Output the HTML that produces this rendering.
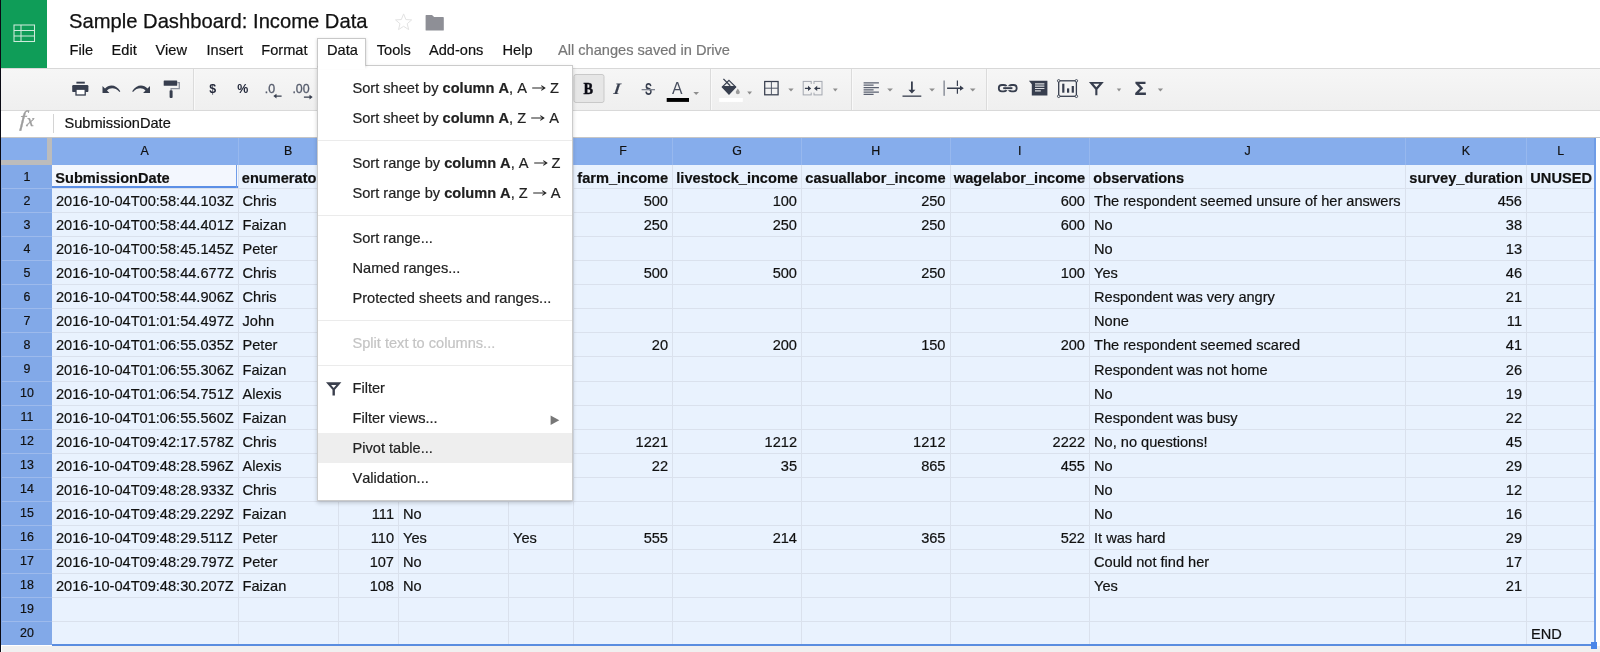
<!DOCTYPE html>
<html><head><meta charset="utf-8"><title>Sample Dashboard: Income Data</title>
<style>
html,body{margin:0;padding:0;}
body{width:1600px;height:652px;overflow:hidden;position:relative;background:#fff;font-family:"Liberation Sans",sans-serif;color:#111;font-size:14.6px;}
div{box-sizing:border-box;}
.abs{position:absolute;}
#wrap{position:absolute;left:0;top:0;width:1600px;height:652px;will-change:transform;}
#edge{position:absolute;left:0;top:0;width:1px;height:652px;background:#0a0a14;z-index:50;}
#logo{position:absolute;left:1px;top:0;width:45.5px;height:67.5px;background:#0f9d58;}
#title{position:absolute;left:69px;top:9px;-webkit-text-stroke:0.25px #111;font-size:20.2px;line-height:24px;color:#111;white-space:nowrap;}
.mi{-webkit-text-stroke:0.2px;position:absolute;top:40px;line-height:20px;font-size:14.6px;color:#111;white-space:nowrap;}
#saved{color:#777;}
#datatab{position:absolute;left:317px;top:38px;width:49px;height:28px;background:#fff;border:1px solid #c8c8c8;border-bottom:none;z-index:31;box-shadow:0 1px 3px rgba(0,0,0,.18);}
#datatabcover{position:absolute;left:318px;top:60px;width:47px;height:9px;background:#fff;z-index:33;}
#toolbar{position:absolute;left:1px;top:68px;width:1599px;height:43px;background:linear-gradient(#f6f6f6,#efefef);border-top:1px solid #d8d8d8;border-bottom:1px solid #d9d9d9;}
.tsep{position:absolute;top:69px;width:1px;height:41px;background:#dbdbdb;box-shadow:1px 0 0 #f9f9f9;}
#fbar{position:absolute;left:1px;top:111px;width:1599px;height:27px;background:#fff;border-bottom:1px solid #c6c6c6;}
#fx{position:absolute;left:20px;top:106.4px;transform:skewX(-4deg);font-family:"Liberation Serif",serif;font-style:italic;font-size:22px;line-height:26px;color:#9d9d9d;-webkit-text-stroke:0.35px #9d9d9d;white-space:nowrap;}
#fx span{font-size:17px;margin-left:0.6px;}
#fsep{position:absolute;left:52.5px;top:114px;width:1px;height:19px;background:#d4d4d4;}
#ftext{-webkit-text-stroke:0.2px;position:absolute;left:64.5px;top:110.5px;line-height:24px;font-size:14.6px;color:#111;}
/* grid */
#gridbg{position:absolute;left:51.5px;top:164.5px;width:1543.5px;height:481px;background:#e9f2fe;}
#colhdr{position:absolute;left:1px;top:138px;width:1594px;height:26.5px;background:#86adec;}
#rowhdr{position:absolute;left:1px;top:164.5px;width:50.5px;height:480px;background:#82a9e8;}
#corner{position:absolute;left:1px;top:138px;width:51px;height:27px;background:#86adec;border-right:5px solid #bcbcbc;border-bottom:5.5px solid #bcbcbc;}
.ch{-webkit-text-stroke:0.2px;position:absolute;top:137.5px;height:27px;line-height:27.4px;text-align:center;font-size:12.4px;color:#111;}
.chl{position:absolute;top:138px;width:1px;height:26.5px;background:#97b8ee;}
.rh{-webkit-text-stroke:0.2px;position:absolute;left:2px;width:50px;height:24px;line-height:24px;text-align:center;font-size:12.4px;color:#111;}
.rhl{position:absolute;left:1.5px;width:50px;height:1px;background:#9dbaec;}
.vl{position:absolute;top:164.5px;width:1px;height:481px;background:#dae1ed;}
.hl{position:absolute;left:51.5px;width:1543.5px;height:1px;background:#dae1ed;}
.c{-webkit-text-stroke:0.2px;position:absolute;height:24px;line-height:24px;padding:0 4.5px;white-space:nowrap;overflow:visible;font-size:14.6px;color:#111;}
.c.b{font-weight:bold;padding-left:3.8px;}
.c.r{text-align:right;}
#selb{position:absolute;left:51.5px;top:644px;width:1544.5px;height:2px;background:#5a8de0;}
#selr{position:absolute;left:1594px;top:137.5px;width:2px;height:508px;background:#6f9ce6;}
#handle{position:absolute;left:1591px;top:641.5px;width:6px;height:7.5px;background:#4a86e8;}
#below{position:absolute;left:1.5px;top:646px;width:1598.5px;height:6px;background:#f0f0f0;}
#active{position:absolute;left:51.5px;top:164.5px;width:186.5px;height:24px;background:#f3f7fe;}
#actb{position:absolute;left:52px;top:186px;width:186px;height:2px;background:#5b8fe6;z-index:6;}
#actr{position:absolute;left:236px;top:165px;width:1px;height:23px;background:#6f9dea;z-index:6;}
/* menu */
#menu{position:absolute;left:317px;top:65px;width:256px;height:435.5px;background:#fff;border:1px solid #cbcbcb;box-shadow:0 2px 4px rgba(0,0,0,.19);z-index:30;}
.it{-webkit-text-stroke:0.2px;font-kerning:none;position:absolute;left:0;width:254px;height:30px;line-height:30px;padding-left:34.5px;font-size:14.6px;color:#222;white-space:nowrap;}
.it.dis{color:#c4c4c4;}
.it.hi{background:#eeeeee;}
.ar{display:inline-block;vertical-align:-0.5px;}
.ms{position:absolute;left:0;width:254px;height:1px;background:#ebebeb;}
</style></head>
<body>
<div id="wrap">
<div id="edge"></div>
<div id="logo">
<svg class="abs" style="left:12px;top:23.6px" width="23" height="19" viewBox="0 0 23 19"><g fill="none" stroke="#cdeadb" stroke-width="1.05"><rect x="1" y="1" width="20.5" height="16.5"/><line x1="1" y1="6.5" x2="21.5" y2="6.5"/><line x1="1" y1="12" x2="21.5" y2="12"/><line x1="8" y1="1" x2="8" y2="17.5"/></g></svg>
</div>
<div id="title">Sample Dashboard: Income Data</div>
<svg class="abs" style="left:393px;top:11px" width="54" height="22" viewBox="393 11 54 22">
<path d="M403.6 13.9 L405.9 19.6 L411.7 19.9 L407.2 23.7 L408.7 29.6 L403.6 26.3 L398.5 29.6 L400 23.7 L395.5 19.9 L401.3 19.6 Z" fill="none" stroke="#e2e2e2" stroke-width="1"/>
<path d="M425.6 15.6 Q425.6 15 426.2 15 H432 L434.1 17 H443.1 Q443.8 17 443.8 17.7 V29.9 Q443.8 30.6 443.1 30.6 H426.2 Q425.6 30.6 425.6 29.9 Z" fill="#8e8f96"/>
</svg>
<div class="mi" style="left:69.6px">File</div>
<div class="mi" style="left:111.6px">Edit</div>
<div class="mi" style="left:155.6px">View</div>
<div class="mi" style="left:206.5px">Insert</div>
<div class="mi" style="left:261.3px">Format</div>
<div id="datatab"></div><div id="datatabcover"></div>
<div class="mi" style="left:327px;z-index:34">Data</div>
<div class="mi" style="left:376.8px">Tools</div>
<div class="mi" style="left:429px">Add-ons</div>
<div class="mi" style="left:502.5px">Help</div>
<div class="mi" id="saved" style="left:558px">All changes saved in Drive</div>

<div id="toolbar"></div>
<div class="tsep" style="left:192.8px"></div>
<div class="tsep" style="left:710.2px"></div>
<div class="tsep" style="left:851px"></div>
<div class="tsep" style="left:986.3px"></div>
<!--ICONS_START-->
<svg class="abs" style="left:0;top:68px;z-index:5" width="1600" height="42" viewBox="0 68 1600 42">
<g fill="#373e4e">
<!-- print -->
<rect x="76.4" y="81.7" width="8.4" height="1.9"/>
<rect x="72.2" y="85.1" width="16.2" height="7" rx="1.2"/>
<rect x="76" y="89.2" width="9.2" height="5.8" fill="#fff" stroke="#373e4e" stroke-width="1.3"/>
<!-- undo -->
<path d="M102.5 86.0 L102.5 92.9 L109.4 92.9 L107.0 90.5 C110 87.6 115.2 87.3 119.5 91.9 L120.3 91.2 C116.4 84.6 109.2 84.0 105.0 88.5 Z"/>
<!-- redo -->
<path d="M150.0 86.0 L150.0 92.9 L143.1 92.9 L145.5 90.5 C142.5 87.6 137.3 87.3 133.0 91.9 L132.2 91.2 C136.1 84.6 143.3 84.0 147.5 88.5 Z"/>
<!-- paint roller -->
<rect x="163.7" y="80.5" width="13.5" height="5.3" rx="0.6"/>
<path d="M177.2 82.6 H179.3 V88.7 H171.1 V90.6" fill="none" stroke="#8d929d" stroke-width="1.3"/>
<rect x="169.6" y="90.2" width="3" height="7.8" rx="0.9"/>
</g>
<g font-family="Liberation Sans, sans-serif" font-size="12.4" fill="#23283a">
<text x="209.3" y="92.9" font-weight="bold">$</text>
<text x="237.3" y="93.1" font-weight="bold">%</text>
<text x="264.7" y="93.2" fill="#565c6c" stroke="#565c6c" stroke-width="0.3">.0</text>
<text x="292.4" y="93.2" fill="#565c6c" stroke="#565c6c" stroke-width="0.3">.00</text>
</g>
<g fill="#373e4e">
<path d="M273.3 96.1 L276.5 93.7 V95.4 H281.6 V96.8 H276.5 V98.5 Z"/>
<path d="M312.7 97.1 L309.5 94.7 V96.4 H303.9 V97.8 H309.5 V99.5 Z"/>
</g>
<!-- bold button -->
<rect x="574" y="74.5" width="30" height="28" rx="2" fill="#e6e6e6" stroke="#c9c9c9" stroke-width="1"/>
<text transform="translate(583.5,93.7) scale(0.9,1)" font-family="Liberation Serif, serif" font-weight="bold" font-size="15.9" fill="#0b0b14" stroke="#0b0b14" stroke-width="0.45">B</text>
<text transform="translate(613.2,94) skewX(-9)" font-family="Liberation Serif, serif" font-weight="bold" font-style="italic" font-size="16" fill="#373e4e" stroke="#373e4e" stroke-width="0.2">I</text>
<text transform="translate(644.9,94.9) scale(0.68,1)" font-family="Liberation Sans, sans-serif" font-weight="bold" font-size="15.6" fill="#373e4e">S</text>
<rect x="641.6" y="89" width="13.4" height="1.3" fill="#7d828e"/>
<text x="671.9" y="94" font-family="Liberation Sans, sans-serif" font-size="15.7" fill="#474e5e">A</text>
<rect x="666.7" y="98" width="22.3" height="3.9" fill="#000"/>
<g fill="#8e8e8e">
<path d="M693.4 91.9 H699 L696.2 94.9 Z"/>
<path d="M747.2 91.4 H752 L749.6 94.5 Z"/>
<path d="M788.3 88.4 H793.6 L791 91.4 Z"/>
<path d="M832.9 88.4 H837.7 L835.3 91.4 Z"/>
<path d="M887.2 88.4 H892.9 L890 91.4 Z"/>
<path d="M929.2 88.4 H934.9 L932 91.4 Z"/>
<path d="M969.9 88.4 H975.5 L972.7 91.4 Z"/>
<path d="M1116.8 88.4 H1121.2 L1119 91.4 Z"/>
<path d="M1157.8 88.4 H1163.1 L1160.4 91.4 Z"/>
</g>
<!-- bucket -->
<path d="M729 80.3 L735.8 87.1 L729 94.2 L722.2 87.1 Z" fill="#e9e9e9" stroke="#373e4e" stroke-width="1.1"/>
<path d="M723.4 85.9 H734.6 L735.8 87.1 L729 94.2 L722.2 87.1 Z" fill="#373e4e"/>
<path d="M723.4 78.9 L730.2 85.7" stroke="#373e4e" stroke-width="1.3" fill="none"/>
<path d="M737.8 88.6 C739 90.4 739.8 91.3 739.8 92.2 A2 2 0 0 1 735.8 92.2 C735.8 91.3 736.6 90.4 737.8 88.6 Z" fill="#9b9b9b"/>
<rect x="719.2" y="98" width="23.6" height="3.9" fill="#fff"/>
<!-- borders -->
<rect x="764.7" y="81.5" width="13.4" height="13.3" fill="none" stroke="#373e4e" stroke-width="1.25"/>
<path d="M771.4 81.6 V94.7 M764.8 88.2 H778" stroke="#4b5262" stroke-width="0.95" fill="none"/>
<!-- merge -->
<rect x="803.2" y="81.4" width="8" height="13.5" fill="none" stroke="#a3a7b0" stroke-width="1"/>
<rect x="814" y="81.4" width="8" height="13.5" fill="none" stroke="#a3a7b0" stroke-width="1"/>
<rect x="809.5" y="84" width="6.2" height="8.6" fill="#f3f3f3"/>
<g fill="#373e4e">
<path d="M811.2 88.4 L808 85.8 V87.7 H804.9 V89.1 H808 V91 Z"/>
<path d="M814 88.4 L817.2 85.8 V87.7 H820.3 V89.1 H817.2 V91 Z"/>
</g>
<!-- align -->
<g stroke="#5a6070" stroke-width="1.25" fill="none">
<path d="M863.6 82.9 H878.9 M863.6 85.2 H873.6 M863.6 87.5 H878.9 M863.6 89.8 H873.6 M863.6 92.1 H878.9 M863.6 94.4 H873.6"/>
</g>
<!-- valign -->
<g fill="#373e4e">
<path d="M911 81.4 H912.8 V89.7 H915.4 L911.9 93.4 L908.4 89.7 H911 Z"/>
<rect x="902.5" y="95.5" width="18.8" height="1.3"/>
</g>
<!-- wrap -->
<path d="M944.1 80.5 V95.8" stroke="#5a6070" stroke-width="1" fill="none"/>
<path d="M957.4 80.5 V95.8" stroke="#373e4e" stroke-width="1.2" stroke-dasharray="5.5 2.2" fill="none"/>
<path d="M947.1 87.4 H960 V85.6 L963.8 88.2 L960 90.8 V89 H947.1 Z" fill="#373e4e"/>
<!-- link -->
<g fill="none" stroke="#373e4e" stroke-width="1.8">
<rect x="998.8" y="85" width="8" height="6.3" rx="3.1"/>
<rect x="1008.7" y="85" width="8" height="6.3" rx="3.1"/>
</g>
<rect x="1005.4" y="86.2" width="4.8" height="3.9" fill="#f3f3f3"/>
<rect x="1003.2" y="87.2" width="9.2" height="1.9" fill="#373e4e"/>
<!-- comment -->
<path d="M1028.9 80.7 H1047.4 V95.5 H1031.8 V84.2 Z" fill="#373e4e"/>
<path d="M1035 83.9 H1044.4 M1035 86.2 H1044.4 M1035 88.5 H1044.4 M1035 90.8 H1040.8" stroke="#dcdde0" stroke-width="1.2" fill="none"/>
<!-- chart -->
<rect x="1058.7" y="80.8" width="17.7" height="15.5" fill="#f3f3f3" stroke="#373e4e" stroke-width="1.3"/>
<g fill="#f3f3f3" stroke="#373e4e" stroke-width="0.9">
<circle cx="1058.7" cy="80.8" r="1.25"/><circle cx="1076.4" cy="80.8" r="1.25"/><circle cx="1058.7" cy="96.3" r="1.25"/><circle cx="1076.4" cy="96.3" r="1.25"/>
</g>
<g fill="#373e4e">
<rect x="1062.2" y="83.7" width="2.2" height="9"/>
<rect x="1067" y="88.4" width="2.2" height="4.3"/>
<rect x="1071.7" y="86" width="2.2" height="6.7"/>
<!-- filter -->
<path d="M1088.9 81.9 H1103.8 L1097.4 89.4 V95.2 H1095.3 V89.4 Z M1093.3 83.8 L1096.35 87.3 L1099.4 83.8 Z" fill-rule="evenodd"/>
<!-- sigma -->
<path d="M1135.4 81.7 H1145.5 V84 H1139.2 L1143.2 88.2 L1138.9 92.6 H1145.9 V94.9 H1135.2 V93.1 L1139.9 88.2 L1135.4 83.5 Z"/>
</g>
</svg>
<!--ICONS_END-->

<div id="fbar"></div>
<div id="fx">f<span>x</span></div><div id="fsep"></div><div id="ftext">SubmissionDate</div>

<div id="colhdr"></div><div id="rowhdr"></div><div id="gridbg"></div><div id="active"></div><div id="actb"></div><div id="actr"></div>
<div class="ch" style="left:51.5px;width:186.5px">A</div>
<div class="chl" style="left:237.5px"></div>
<div class="ch" style="left:238px;width:100.5px">B</div>
<div class="chl" style="left:338.0px"></div>
<div class="ch" style="left:338.5px;width:60.0px">C</div>
<div class="chl" style="left:398.0px"></div>
<div class="ch" style="left:398.5px;width:110.0px">D</div>
<div class="chl" style="left:508.0px"></div>
<div class="ch" style="left:508.5px;width:65.0px">E</div>
<div class="chl" style="left:573.0px"></div>
<div class="ch" style="left:573.5px;width:99.0px">F</div>
<div class="chl" style="left:672.0px"></div>
<div class="ch" style="left:672.5px;width:129.0px">G</div>
<div class="chl" style="left:801.0px"></div>
<div class="ch" style="left:801.5px;width:148.5px">H</div>
<div class="chl" style="left:949.5px"></div>
<div class="ch" style="left:950px;width:139.5px">I</div>
<div class="chl" style="left:1089.0px"></div>
<div class="ch" style="left:1089.5px;width:316.0px">J</div>
<div class="chl" style="left:1405.0px"></div>
<div class="ch" style="left:1405.5px;width:121.0px">K</div>
<div class="chl" style="left:1526.0px"></div>
<div class="ch" style="left:1526.5px;width:68.5px">L</div>
<div class="chl" style="left:1594.5px"></div>
<div class="rh" style="top:165.00px">1</div>
<div class="rhl" style="top:188.06px"></div>
<div class="rh" style="top:189.00px">2</div>
<div class="rhl" style="top:212.12px"></div>
<div class="rh" style="top:213.00px">3</div>
<div class="rhl" style="top:236.18px"></div>
<div class="rh" style="top:237.00px">4</div>
<div class="rhl" style="top:260.24px"></div>
<div class="rh" style="top:261.00px">5</div>
<div class="rhl" style="top:284.30px"></div>
<div class="rh" style="top:285.00px">6</div>
<div class="rhl" style="top:308.36px"></div>
<div class="rh" style="top:309.00px">7</div>
<div class="rhl" style="top:332.42px"></div>
<div class="rh" style="top:333.00px">8</div>
<div class="rhl" style="top:356.48px"></div>
<div class="rh" style="top:357.00px">9</div>
<div class="rhl" style="top:380.54px"></div>
<div class="rh" style="top:381.00px">10</div>
<div class="rhl" style="top:404.60px"></div>
<div class="rh" style="top:405.00px">11</div>
<div class="rhl" style="top:428.66px"></div>
<div class="rh" style="top:429.00px">12</div>
<div class="rhl" style="top:452.72px"></div>
<div class="rh" style="top:453.00px">13</div>
<div class="rhl" style="top:476.78px"></div>
<div class="rh" style="top:477.00px">14</div>
<div class="rhl" style="top:500.84px"></div>
<div class="rh" style="top:501.00px">15</div>
<div class="rhl" style="top:524.90px"></div>
<div class="rh" style="top:525.00px">16</div>
<div class="rhl" style="top:548.96px"></div>
<div class="rh" style="top:549.00px">17</div>
<div class="rhl" style="top:573.02px"></div>
<div class="rh" style="top:573.00px">18</div>
<div class="rhl" style="top:597.08px"></div>
<div class="rh" style="top:597.00px">19</div>
<div class="rhl" style="top:621.14px"></div>
<div class="rh" style="top:621.00px">20</div>
<div class="vl" style="left:237.5px"></div>
<div class="vl" style="left:338.0px"></div>
<div class="vl" style="left:398.0px"></div>
<div class="vl" style="left:508.0px"></div>
<div class="vl" style="left:573.0px"></div>
<div class="vl" style="left:672.0px"></div>
<div class="vl" style="left:801.0px"></div>
<div class="vl" style="left:949.5px"></div>
<div class="vl" style="left:1089.0px"></div>
<div class="vl" style="left:1405.0px"></div>
<div class="vl" style="left:1526.0px"></div>
<div class="hl" style="top:188.06px"></div>
<div class="hl" style="top:212.12px"></div>
<div class="hl" style="top:236.18px"></div>
<div class="hl" style="top:260.24px"></div>
<div class="hl" style="top:284.30px"></div>
<div class="hl" style="top:308.36px"></div>
<div class="hl" style="top:332.42px"></div>
<div class="hl" style="top:356.48px"></div>
<div class="hl" style="top:380.54px"></div>
<div class="hl" style="top:404.60px"></div>
<div class="hl" style="top:428.66px"></div>
<div class="hl" style="top:452.72px"></div>
<div class="hl" style="top:476.78px"></div>
<div class="hl" style="top:500.84px"></div>
<div class="hl" style="top:524.90px"></div>
<div class="hl" style="top:548.96px"></div>
<div class="hl" style="top:573.02px"></div>
<div class="hl" style="top:597.08px"></div>
<div class="hl" style="top:621.14px"></div>
<div class="c b" style="left:51.5px;top:166.00px;width:186.5px">SubmissionDate</div>
<div class="c b" style="left:238px;top:166.00px;width:100.5px">enumerator_name</div>
<div class="c b" style="left:338.5px;top:166.00px;width:60.0px">hhid</div>
<div class="c b" style="left:398.5px;top:166.00px;width:110.0px">consent</div>
<div class="c b" style="left:508.5px;top:166.00px;width:65.0px">revisit</div>
<div class="c b" style="left:573.5px;top:166.00px;width:99.0px">farm_income</div>
<div class="c b" style="left:672.5px;top:166.00px;width:129.0px">livestock_income</div>
<div class="c b" style="left:801.5px;top:166.00px;width:148.5px">casuallabor_income</div>
<div class="c b" style="left:950px;top:166.00px;width:139.5px">wagelabor_income</div>
<div class="c b" style="left:1089.5px;top:166.00px;width:316.0px">observations</div>
<div class="c b" style="left:1405.5px;top:166.00px;width:121.0px">survey_duration</div>
<div class="c b" style="left:1526.5px;top:166.00px;width:68.5px">UNUSED</div>
<div class="c" style="left:51.5px;top:189.00px;width:186.5px">2016-10-04T00:58:44.103Z</div>
<div class="c" style="left:238px;top:189.00px;width:100.5px">Chris</div>
<div class="c r" style="left:338.5px;top:189.00px;width:60.0px">101</div>
<div class="c" style="left:398.5px;top:189.00px;width:110.0px">Yes</div>
<div class="c r" style="left:573.5px;top:189.00px;width:99.0px">500</div>
<div class="c r" style="left:672.5px;top:189.00px;width:129.0px">100</div>
<div class="c r" style="left:801.5px;top:189.00px;width:148.5px">250</div>
<div class="c r" style="left:950px;top:189.00px;width:139.5px">600</div>
<div class="c" style="left:1089.5px;top:189.00px;width:316.0px">The respondent seemed unsure of her answers</div>
<div class="c r" style="left:1405.5px;top:189.00px;width:121.0px">456</div>
<div class="c" style="left:51.5px;top:213.00px;width:186.5px">2016-10-04T00:58:44.401Z</div>
<div class="c" style="left:238px;top:213.00px;width:100.5px">Faizan</div>
<div class="c r" style="left:338.5px;top:213.00px;width:60.0px">102</div>
<div class="c" style="left:398.5px;top:213.00px;width:110.0px">Yes</div>
<div class="c r" style="left:573.5px;top:213.00px;width:99.0px">250</div>
<div class="c r" style="left:672.5px;top:213.00px;width:129.0px">250</div>
<div class="c r" style="left:801.5px;top:213.00px;width:148.5px">250</div>
<div class="c r" style="left:950px;top:213.00px;width:139.5px">600</div>
<div class="c" style="left:1089.5px;top:213.00px;width:316.0px">No</div>
<div class="c r" style="left:1405.5px;top:213.00px;width:121.0px">38</div>
<div class="c" style="left:51.5px;top:237.00px;width:186.5px">2016-10-04T00:58:45.145Z</div>
<div class="c" style="left:238px;top:237.00px;width:100.5px">Peter</div>
<div class="c r" style="left:338.5px;top:237.00px;width:60.0px">103</div>
<div class="c" style="left:398.5px;top:237.00px;width:110.0px">No</div>
<div class="c" style="left:1089.5px;top:237.00px;width:316.0px">No</div>
<div class="c r" style="left:1405.5px;top:237.00px;width:121.0px">13</div>
<div class="c" style="left:51.5px;top:261.00px;width:186.5px">2016-10-04T00:58:44.677Z</div>
<div class="c" style="left:238px;top:261.00px;width:100.5px">Chris</div>
<div class="c r" style="left:338.5px;top:261.00px;width:60.0px">104</div>
<div class="c" style="left:398.5px;top:261.00px;width:110.0px">Yes</div>
<div class="c r" style="left:573.5px;top:261.00px;width:99.0px">500</div>
<div class="c r" style="left:672.5px;top:261.00px;width:129.0px">500</div>
<div class="c r" style="left:801.5px;top:261.00px;width:148.5px">250</div>
<div class="c r" style="left:950px;top:261.00px;width:139.5px">100</div>
<div class="c" style="left:1089.5px;top:261.00px;width:316.0px">Yes</div>
<div class="c r" style="left:1405.5px;top:261.00px;width:121.0px">46</div>
<div class="c" style="left:51.5px;top:285.00px;width:186.5px">2016-10-04T00:58:44.906Z</div>
<div class="c" style="left:238px;top:285.00px;width:100.5px">Chris</div>
<div class="c r" style="left:338.5px;top:285.00px;width:60.0px">105</div>
<div class="c" style="left:398.5px;top:285.00px;width:110.0px">No</div>
<div class="c" style="left:1089.5px;top:285.00px;width:316.0px">Respondent was very angry</div>
<div class="c r" style="left:1405.5px;top:285.00px;width:121.0px">21</div>
<div class="c" style="left:51.5px;top:309.00px;width:186.5px">2016-10-04T01:01:54.497Z</div>
<div class="c" style="left:238px;top:309.00px;width:100.5px">John</div>
<div class="c r" style="left:338.5px;top:309.00px;width:60.0px">106</div>
<div class="c" style="left:398.5px;top:309.00px;width:110.0px">No</div>
<div class="c" style="left:1089.5px;top:309.00px;width:316.0px">None</div>
<div class="c r" style="left:1405.5px;top:309.00px;width:121.0px">11</div>
<div class="c" style="left:51.5px;top:333.00px;width:186.5px">2016-10-04T01:06:55.035Z</div>
<div class="c" style="left:238px;top:333.00px;width:100.5px">Peter</div>
<div class="c r" style="left:338.5px;top:333.00px;width:60.0px">109</div>
<div class="c" style="left:398.5px;top:333.00px;width:110.0px">Yes</div>
<div class="c r" style="left:573.5px;top:333.00px;width:99.0px">20</div>
<div class="c r" style="left:672.5px;top:333.00px;width:129.0px">200</div>
<div class="c r" style="left:801.5px;top:333.00px;width:148.5px">150</div>
<div class="c r" style="left:950px;top:333.00px;width:139.5px">200</div>
<div class="c" style="left:1089.5px;top:333.00px;width:316.0px">The respondent seemed scared</div>
<div class="c r" style="left:1405.5px;top:333.00px;width:121.0px">41</div>
<div class="c" style="left:51.5px;top:358.00px;width:186.5px">2016-10-04T01:06:55.306Z</div>
<div class="c" style="left:238px;top:358.00px;width:100.5px">Faizan</div>
<div class="c r" style="left:338.5px;top:358.00px;width:60.0px">112</div>
<div class="c" style="left:398.5px;top:358.00px;width:110.0px">No</div>
<div class="c" style="left:1089.5px;top:358.00px;width:316.0px">Respondent was not home</div>
<div class="c r" style="left:1405.5px;top:358.00px;width:121.0px">26</div>
<div class="c" style="left:51.5px;top:382.00px;width:186.5px">2016-10-04T01:06:54.751Z</div>
<div class="c" style="left:238px;top:382.00px;width:100.5px">Alexis</div>
<div class="c r" style="left:338.5px;top:382.00px;width:60.0px">113</div>
<div class="c" style="left:398.5px;top:382.00px;width:110.0px">No</div>
<div class="c" style="left:1089.5px;top:382.00px;width:316.0px">No</div>
<div class="c r" style="left:1405.5px;top:382.00px;width:121.0px">19</div>
<div class="c" style="left:51.5px;top:406.00px;width:186.5px">2016-10-04T01:06:55.560Z</div>
<div class="c" style="left:238px;top:406.00px;width:100.5px">Faizan</div>
<div class="c r" style="left:338.5px;top:406.00px;width:60.0px">114</div>
<div class="c" style="left:398.5px;top:406.00px;width:110.0px">No</div>
<div class="c" style="left:1089.5px;top:406.00px;width:316.0px">Respondent was busy</div>
<div class="c r" style="left:1405.5px;top:406.00px;width:121.0px">22</div>
<div class="c" style="left:51.5px;top:430.00px;width:186.5px">2016-10-04T09:42:17.578Z</div>
<div class="c" style="left:238px;top:430.00px;width:100.5px">Chris</div>
<div class="c r" style="left:338.5px;top:430.00px;width:60.0px">115</div>
<div class="c" style="left:398.5px;top:430.00px;width:110.0px">Yes</div>
<div class="c r" style="left:573.5px;top:430.00px;width:99.0px">1221</div>
<div class="c r" style="left:672.5px;top:430.00px;width:129.0px">1212</div>
<div class="c r" style="left:801.5px;top:430.00px;width:148.5px">1212</div>
<div class="c r" style="left:950px;top:430.00px;width:139.5px">2222</div>
<div class="c" style="left:1089.5px;top:430.00px;width:316.0px">No, no questions!</div>
<div class="c r" style="left:1405.5px;top:430.00px;width:121.0px">45</div>
<div class="c" style="left:51.5px;top:454.00px;width:186.5px">2016-10-04T09:48:28.596Z</div>
<div class="c" style="left:238px;top:454.00px;width:100.5px">Alexis</div>
<div class="c r" style="left:338.5px;top:454.00px;width:60.0px">116</div>
<div class="c" style="left:398.5px;top:454.00px;width:110.0px">Yes</div>
<div class="c r" style="left:573.5px;top:454.00px;width:99.0px">22</div>
<div class="c r" style="left:672.5px;top:454.00px;width:129.0px">35</div>
<div class="c r" style="left:801.5px;top:454.00px;width:148.5px">865</div>
<div class="c r" style="left:950px;top:454.00px;width:139.5px">455</div>
<div class="c" style="left:1089.5px;top:454.00px;width:316.0px">No</div>
<div class="c r" style="left:1405.5px;top:454.00px;width:121.0px">29</div>
<div class="c" style="left:51.5px;top:478.00px;width:186.5px">2016-10-04T09:48:28.933Z</div>
<div class="c" style="left:238px;top:478.00px;width:100.5px">Chris</div>
<div class="c r" style="left:338.5px;top:478.00px;width:60.0px">117</div>
<div class="c" style="left:398.5px;top:478.00px;width:110.0px">No</div>
<div class="c" style="left:1089.5px;top:478.00px;width:316.0px">No</div>
<div class="c r" style="left:1405.5px;top:478.00px;width:121.0px">12</div>
<div class="c" style="left:51.5px;top:502.00px;width:186.5px">2016-10-04T09:48:29.229Z</div>
<div class="c" style="left:238px;top:502.00px;width:100.5px">Faizan</div>
<div class="c r" style="left:338.5px;top:502.00px;width:60.0px">111</div>
<div class="c" style="left:398.5px;top:502.00px;width:110.0px">No</div>
<div class="c" style="left:1089.5px;top:502.00px;width:316.0px">No</div>
<div class="c r" style="left:1405.5px;top:502.00px;width:121.0px">16</div>
<div class="c" style="left:51.5px;top:526.00px;width:186.5px">2016-10-04T09:48:29.511Z</div>
<div class="c" style="left:238px;top:526.00px;width:100.5px">Peter</div>
<div class="c r" style="left:338.5px;top:526.00px;width:60.0px">110</div>
<div class="c" style="left:398.5px;top:526.00px;width:110.0px">Yes</div>
<div class="c" style="left:508.5px;top:526.00px;width:65.0px">Yes</div>
<div class="c r" style="left:573.5px;top:526.00px;width:99.0px">555</div>
<div class="c r" style="left:672.5px;top:526.00px;width:129.0px">214</div>
<div class="c r" style="left:801.5px;top:526.00px;width:148.5px">365</div>
<div class="c r" style="left:950px;top:526.00px;width:139.5px">522</div>
<div class="c" style="left:1089.5px;top:526.00px;width:316.0px">It was hard</div>
<div class="c r" style="left:1405.5px;top:526.00px;width:121.0px">29</div>
<div class="c" style="left:51.5px;top:550.00px;width:186.5px">2016-10-04T09:48:29.797Z</div>
<div class="c" style="left:238px;top:550.00px;width:100.5px">Peter</div>
<div class="c r" style="left:338.5px;top:550.00px;width:60.0px">107</div>
<div class="c" style="left:398.5px;top:550.00px;width:110.0px">No</div>
<div class="c" style="left:1089.5px;top:550.00px;width:316.0px">Could not find her</div>
<div class="c r" style="left:1405.5px;top:550.00px;width:121.0px">17</div>
<div class="c" style="left:51.5px;top:574.00px;width:186.5px">2016-10-04T09:48:30.207Z</div>
<div class="c" style="left:238px;top:574.00px;width:100.5px">Faizan</div>
<div class="c r" style="left:338.5px;top:574.00px;width:60.0px">108</div>
<div class="c" style="left:398.5px;top:574.00px;width:110.0px">No</div>
<div class="c" style="left:1089.5px;top:574.00px;width:316.0px">Yes</div>
<div class="c r" style="left:1405.5px;top:574.00px;width:121.0px">21</div>
<div class="c" style="left:1526.5px;top:622.00px;width:68.5px">END</div>
<div id="corner"></div>
<div id="below"></div>
<div id="selb"></div><div id="selr"></div><div id="handle"></div>

<div id="menu">
<div class="it" style="top:6.5px">Sort sheet by <b>column A</b>, A <svg class="ar" width="15" height="10" viewBox="0 0 15 10"><path d="M1.2 5 H13.4 M10.3 2.6 L13.8 5 L10.3 7.4" fill="none" stroke="#222" stroke-width="1.1"/></svg> Z</div>
<div class="it" style="top:36.5px">Sort sheet by <b>column A</b>, Z <svg class="ar" width="15" height="10" viewBox="0 0 15 10"><path d="M1.2 5 H13.4 M10.3 2.6 L13.8 5 L10.3 7.4" fill="none" stroke="#222" stroke-width="1.1"/></svg> A</div>
<div class="ms" style="top:74px"></div>
<div class="it" style="top:81.5px">Sort range by <b>column A</b>, A <svg class="ar" width="15" height="10" viewBox="0 0 15 10"><path d="M1.2 5 H13.4 M10.3 2.6 L13.8 5 L10.3 7.4" fill="none" stroke="#222" stroke-width="1.1"/></svg> Z</div>
<div class="it" style="top:111.5px">Sort range by <b>column A</b>, Z <svg class="ar" width="15" height="10" viewBox="0 0 15 10"><path d="M1.2 5 H13.4 M10.3 2.6 L13.8 5 L10.3 7.4" fill="none" stroke="#222" stroke-width="1.1"/></svg> A</div>
<div class="ms" style="top:149px"></div>
<div class="it" style="top:156.5px">Sort range...</div>
<div class="it" style="top:186.5px">Named ranges...</div>
<div class="it" style="top:216.5px">Protected sheets and ranges...</div>
<div class="ms" style="top:254px"></div>
<div class="it dis" style="top:261.5px">Split text to columns...</div>
<div class="ms" style="top:299px"></div>
<div class="it" style="top:306.5px">Filter</div>
<div class="it" style="top:336.5px">Filter views...</div>
<div class="it hi" style="top:366.5px">Pivot table...</div>
<div class="it" style="top:396.5px">Validation...</div>
<svg class="abs" style="left:7.1px;top:315.4px" width="18" height="17" viewBox="0 0 18 17"><path d="M1 1.2 H16.4 L9.9 8.7 V14.6 H7.5 V8.7 Z M6.1 4 L8.7 7 L11.3 4 Z" fill="#3a3f4c" fill-rule="evenodd"/></svg>
<svg class="abs" style="left:232px;top:349px" width="10" height="11" viewBox="0 0 10 11"><path d="M0.6 0.6 L9.3 5.3 L0.6 10 Z" fill="#777"/></svg>
</div>
</div>
</body></html>
